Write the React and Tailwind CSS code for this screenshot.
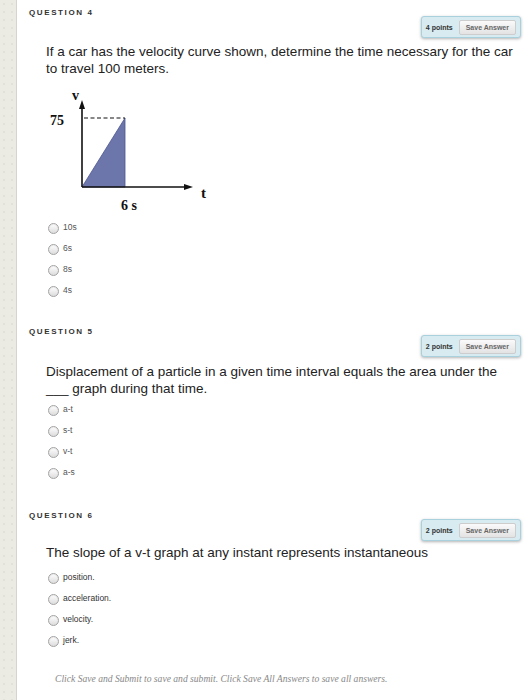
import React from "react"

const sans = { fontFamily: '"Liberation Sans", Arial, sans-serif' }

const PointsBox = ({ points }) => (
  <div className="flex justify-end pr-[8px]">
    <div className="flex items-center gap-[6px] h-[22px] px-[4px] bg-[#d7ebf1] border border-[#a9d1dd] rounded-[3px] shadow-[0_1px_3px_rgba(0,0,0,0.3)]">
      <span className="text-[7px] font-bold text-[#333] leading-none">{points} points</span>
      <span className="flex items-center h-[15px] px-[6px] bg-gradient-to-b from-[#fafafa] to-[#e3e3e3] border border-[#cdcdcd] rounded-[2px] text-[7px] font-bold text-[#666] leading-none">
        Save Answer
      </span>
    </div>
  </div>
)

const Radio = ({ label, dark }) => (
  <div className="flex items-center h-[21px]">
    <span className="w-[11px] h-[11px] rounded-full border border-[#a3a3a3] bg-gradient-to-b from-[#ffffff] to-[#dcdcdc] shadow-[inset_0_1px_1px_rgba(0,0,0,0.08)]" />
    <span className={"ml-[4px] -mt-[3px] text-[8.5px] leading-none " + (dark ? "text-[#333]" : "text-[#555]")}>{label}</span>
  </div>
)

const Label = ({ n, className }) => (
  <div className={"h-[10px] text-[8px] leading-[10px] font-bold tracking-[1.6px] text-[#333] " + className}>QUESTION {n}</div>
)

const Graph = () => (
  <svg width="175" height="130" className="ml-[15px] mt-[8px] block">
    <polygon points="38,102 81,33 81,102" fill="#6d76aa" stroke="#4d5690" strokeWidth="0.8" />
    <line x1="40" y1="33" x2="81" y2="33" stroke="#111" strokeWidth="1.2" strokeDasharray="4 2.5" />
    <line x1="38" y1="22" x2="38" y2="102" stroke="#111" strokeWidth="1.6" />
    <polygon points="38,15 35,24 41,24" fill="#111" />
    <line x1="38" y1="102" x2="142" y2="102" stroke="#111" strokeWidth="1.6" />
    <polygon points="149,102 140,99 140,105" fill="#111" />
    <text x="28" y="15" fontFamily='"Liberation Serif", serif' fontWeight="bold" fontSize="14" fill="#111">v</text>
    <text x="6" y="40" fontFamily='"Liberation Serif", serif' fontWeight="bold" fontSize="14" fill="#111">75</text>
    <text x="157" y="113" fontFamily='"Liberation Serif", serif' fontWeight="bold" fontSize="15" fill="#111">t</text>
    <text x="77" y="125" fontFamily='"Liberation Serif", serif' fontWeight="bold" fontSize="14" fill="#111">6 s</text>
  </svg>
)

export default function App() {
  return (
    <div className="flex min-h-[700px] bg-white" style={sans}>
      <div className="w-[17px] shrink-0 bg-[#ecebe3] border-r border-[#d6d4cc] bg-[radial-gradient(circle,#e3e1d8_0.7px,transparent_1px)] bg-[length:8px_8px]" />
      <div className="flex-1 pl-[12px] pt-[8px]">
        <Label n="4" />
        <div className="mt-[-2px]">
          <PointsBox points="4" />
        </div>
        <p className="ml-[17px] mt-[5px] text-[13.5px] leading-[17px] text-[#222] whitespace-nowrap">
          If a car has the velocity curve shown, determine the time necessary for the car
          <br />
          to travel 100 meters.
        </p>
        <Graph />
        <div className="ml-[19px] mt-[3px]">
          <Radio label="10s" />
          <Radio label="6s" />
          <Radio label="8s" />
          <Radio label="4s" />
        </div>

        <Label n="5" className="mt-[25px]" />
        <div className="mt-[-2px]">
          <PointsBox points="2" />
        </div>
        <p className="ml-[17px] mt-[6px] text-[13.5px] leading-[17px] text-[#222] whitespace-nowrap">
          Displacement of a particle in a given time interval equals the area under the
          <br />
          ___ graph during that time.
        </p>
        <div className="ml-[19px] mt-[3px]">
          <Radio label="a-t" />
          <Radio label="s-t" />
          <Radio label="v-t" />
          <Radio label="a-s" />
        </div>

        <Label n="6" className="mt-[27px]" />
        <div className="mt-[-2px]">
          <PointsBox points="2" />
        </div>
        <p className="ml-[17px] mt-[3px] text-[13.5px] leading-[17px] text-[#222]">
          The slope of a v-t graph at any instant represents instantaneous
        </p>
        <div className="ml-[19px] mt-[7px]">
          <Radio label="position." dark />
          <Radio label="acceleration." dark />
          <Radio label="velocity." dark />
          <Radio label="jerk." dark />
        </div>

        <p
          className="ml-[26px] mt-[20px] text-[9.6px] italic text-[#888] whitespace-nowrap"
          style={{ fontFamily: '"Liberation Serif", Georgia, serif' }}
        >
          Click Save and Submit to save and submit. Click Save All Answers to save all answers.
        </p>
      </div>
    </div>
  )
}
